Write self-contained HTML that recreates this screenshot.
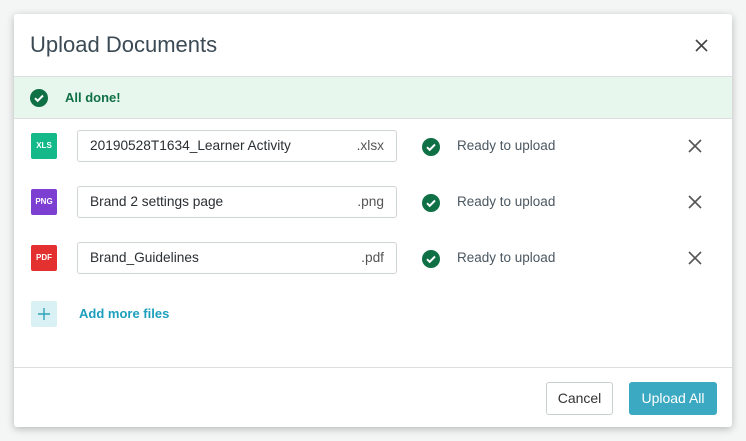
<!DOCTYPE html>
<html><head><style>
body{margin:0;width:746px;height:441px;background:#f4f5f5;font-family:"Liberation Sans",sans-serif;position:relative;overflow:hidden}
.dlg{position:absolute;left:14px;top:14px;width:718px;height:413px;background:#fff;border-radius:3px;box-shadow:0 2px 8px rgba(0,0,0,.25)}
.a{position:absolute}
.title{left:16px;top:18px;font-size:22px;color:#3b4a54}
.hr{left:0;width:718px;height:1px;background:#dcdfe1}
.ban{left:0;top:63px;width:718px;height:41px;background:#e8f7ed;border-bottom:1px solid #dcdfe1}
.chk{width:18px;height:18px;border-radius:50%;background:#0f7045}
.ft{width:26px;height:26px;border-radius:2px;color:#fff;font-size:8px;font-weight:bold;text-align:center;line-height:26px}
.inp{left:63px;width:318px;height:30px;border:1px solid #cfd4d7;border-radius:3px;font-size:13.7px;color:#2a2f33;line-height:30px}
.inp span{position:absolute;left:12px}.inp i{position:absolute;right:12px;font-style:normal;color:#555}
.rd{left:443px;font-size:13.5px;color:#4a5761}
.x{left:674px;width:14px;height:14px}
</style></head><body>
<div class="dlg">
<div class="a title">Upload Documents</div>
<svg class="a" style="left:681px;top:25px" width="13" height="13"><path d="M1 1L12 12M12 1L1 12" stroke="#444" stroke-width="1.6"/></svg>
<div class="a hr" style="top:62px"></div>
<div class="a ban"></div>
<svg class="a chk" style="left:16px;top:75px" viewBox="0 0 18 18"><path d="M5 9.2l2.7 2.6L13 6.5" fill="none" stroke="#fff" stroke-width="2"/></svg>
<div class="a" style="left:51px;top:76px;font-size:13px;font-weight:bold;color:#0f7045">All done!</div>

<div class="a ft" style="left:17px;top:119px;background:#14b98a">XLS</div>
<div class="a inp" style="top:116px"><span>20190528T1634_Learner Activity</span><i>.xlsx</i></div>
<div class="a ft" style="left:17px;top:175px;background:#7d3fd1">PNG</div>
<div class="a inp" style="top:172px"><span>Brand 2 settings page</span><i>.png</i></div>
<div class="a ft" style="left:17px;top:231px;background:#e3312f">PDF</div>
<div class="a inp" style="top:228px"><span>Brand_Guidelines</span><i>.pdf</i></div>

<svg class="a chk" style="left:408px;top:124px" viewBox="0 0 18 18"><path d="M5 9.2l2.7 2.6L13 6.5" fill="none" stroke="#fff" stroke-width="2"/></svg>
<svg class="a chk" style="left:408px;top:180px" viewBox="0 0 18 18"><path d="M5 9.2l2.7 2.6L13 6.5" fill="none" stroke="#fff" stroke-width="2"/></svg>
<svg class="a chk" style="left:408px;top:236px" viewBox="0 0 18 18"><path d="M5 9.2l2.7 2.6L13 6.5" fill="none" stroke="#fff" stroke-width="2"/></svg>
<div class="a rd" style="top:124px">Ready to upload</div>
<div class="a rd" style="top:180px">Ready to upload</div>
<div class="a rd" style="top:236px">Ready to upload</div>
<svg class="a x" style="top:125px"><path d="M1 1L13 13M13 1L1 13" stroke="#555" stroke-width="1.6"/></svg>
<svg class="a x" style="top:181px"><path d="M1 1L13 13M13 1L1 13" stroke="#555" stroke-width="1.6"/></svg>
<svg class="a x" style="top:237px"><path d="M1 1L13 13M13 1L1 13" stroke="#555" stroke-width="1.6"/></svg>

<div class="a" style="left:17px;top:287px;width:26px;height:26px;background:#d9f1f4;border-radius:2px"></div>
<svg class="a" style="left:24px;top:294px" width="12" height="12"><path d="M6 0V12M0 6H12" stroke="#2fa3b8" stroke-width="1.4"/></svg>
<div class="a" style="left:65px;top:292px;font-size:13px;font-weight:bold;color:#1c9fbd">Add more files</div>

<div class="a hr" style="top:353px"></div>
<div class="a" style="left:532px;top:368px;width:65px;height:31px;border:1px solid #c9ced1;border-radius:3px;font-size:14px;color:#333;text-align:center;line-height:31px">Cancel</div>
<div class="a" style="left:615px;top:368px;width:88px;height:33px;background:#3aa9c1;border-radius:3px;font-size:14px;color:#fff;text-align:center;line-height:33px">Upload All</div>
</div>
</body></html>
